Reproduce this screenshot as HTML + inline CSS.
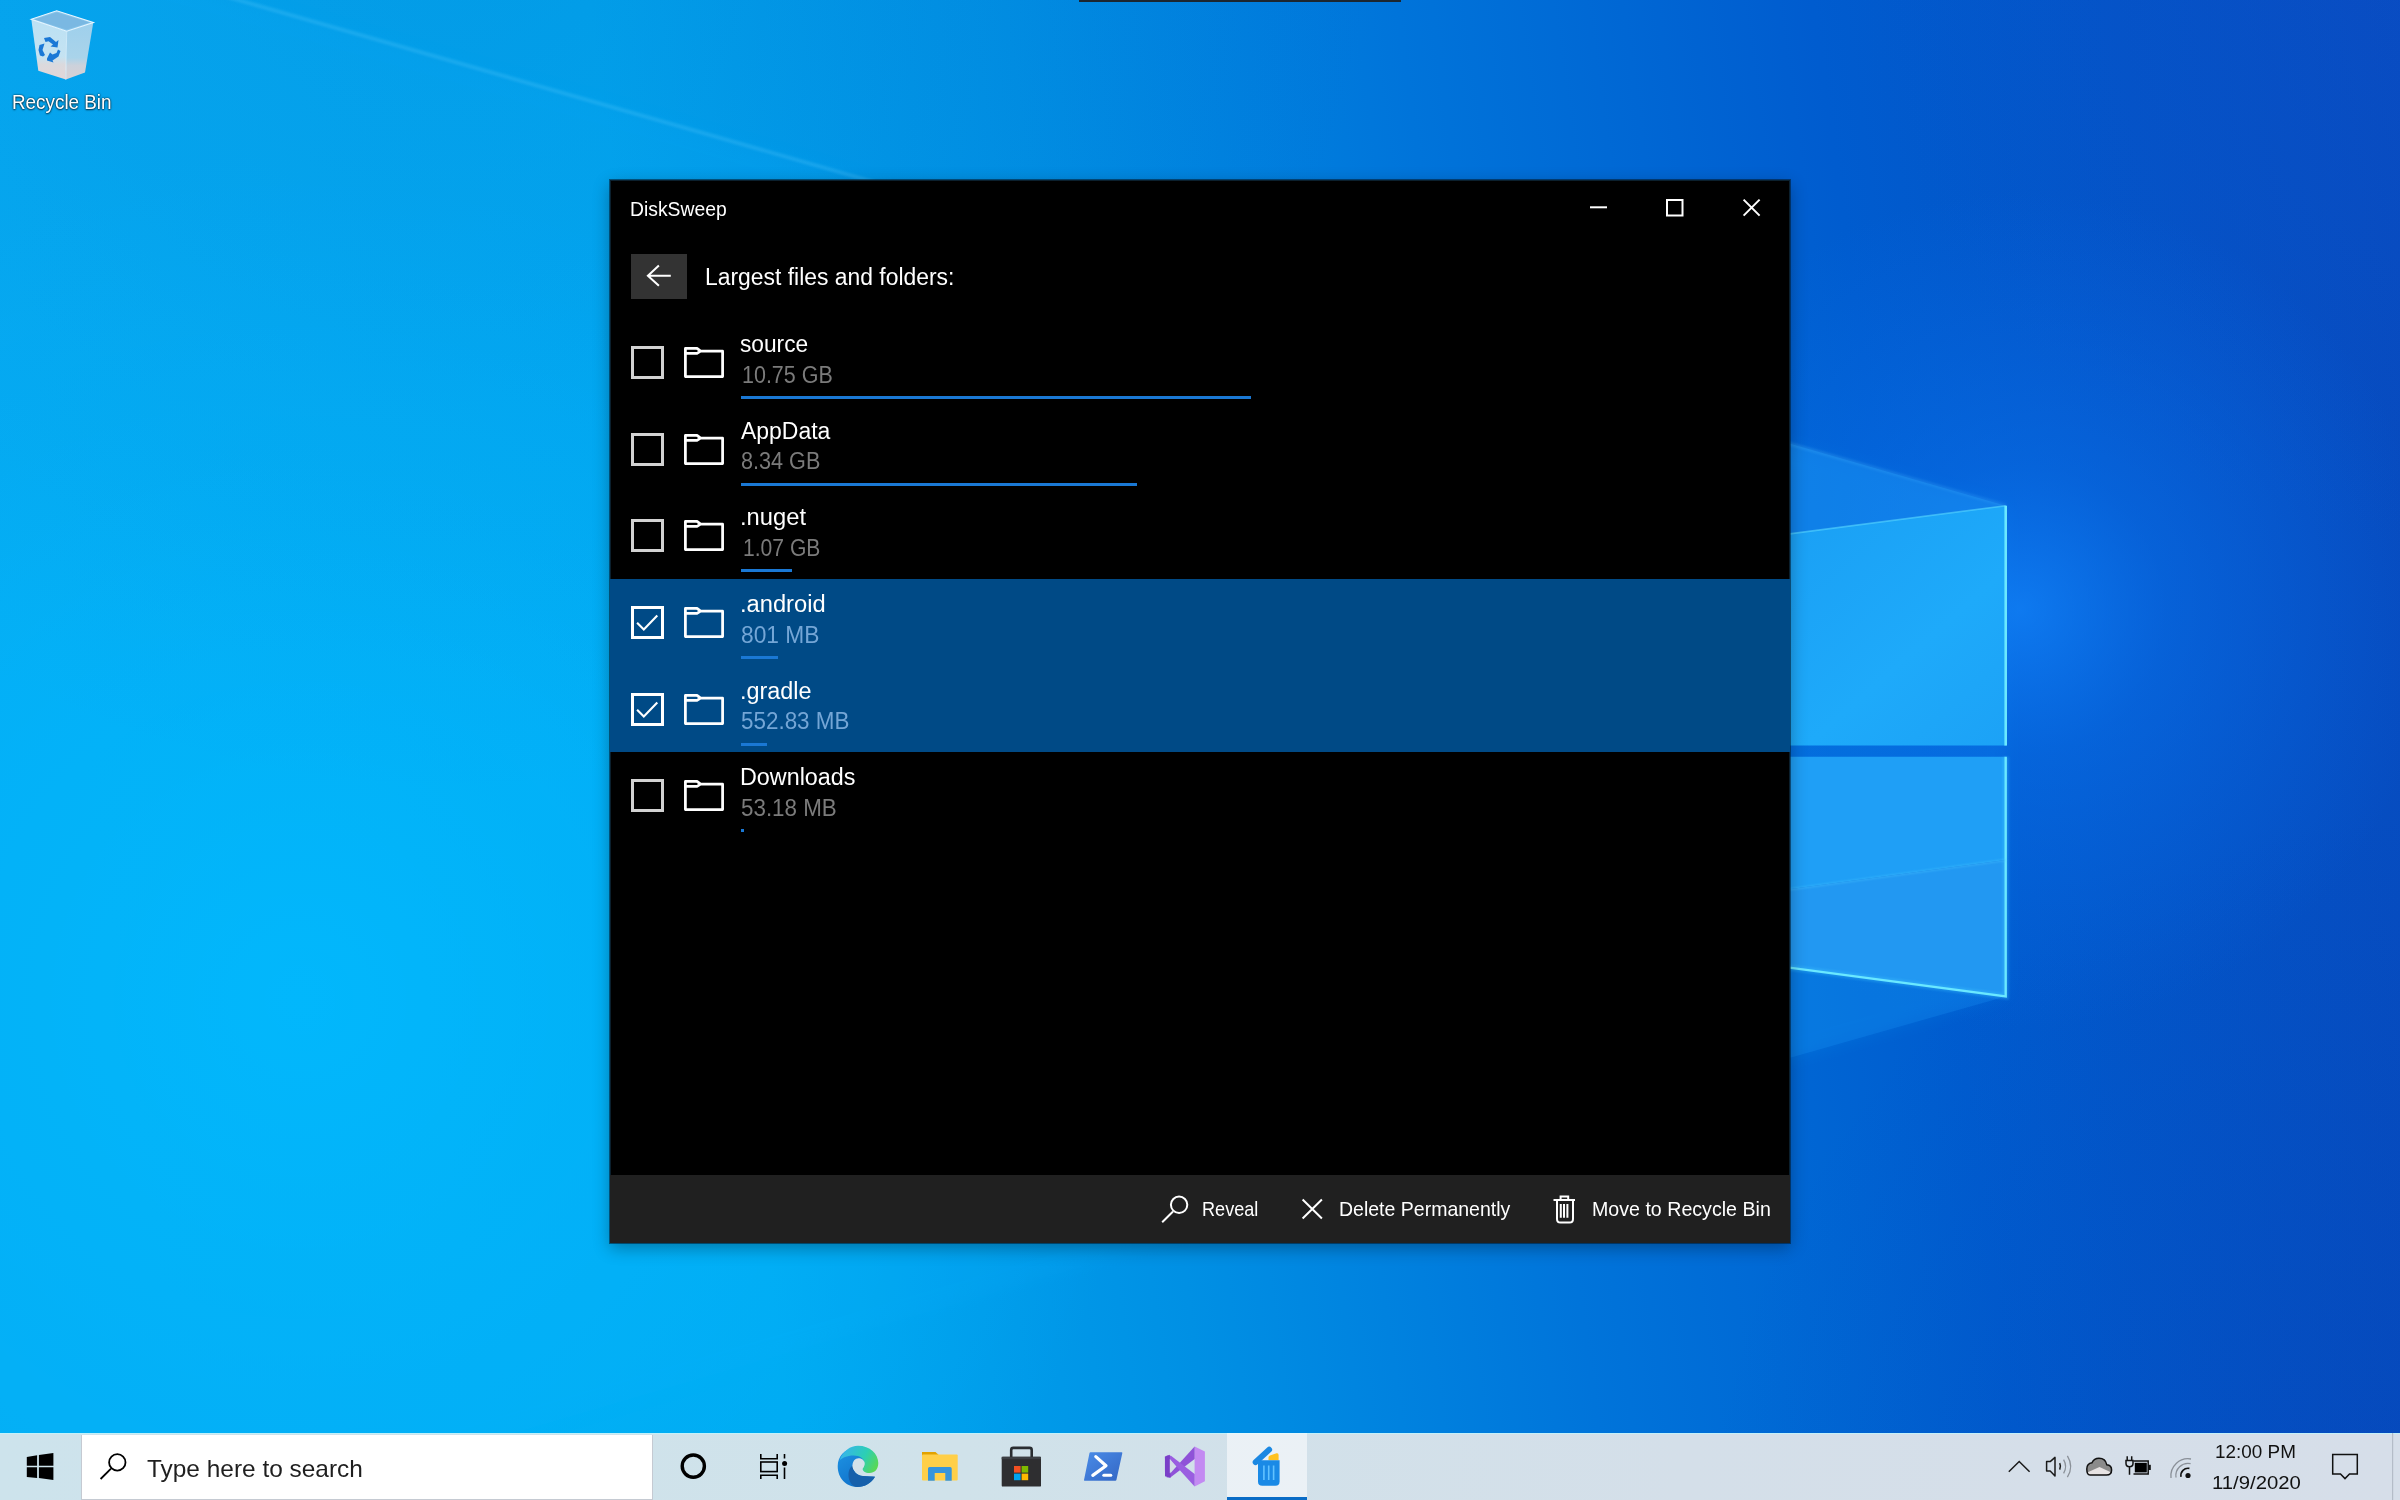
<!DOCTYPE html>
<html><head><meta charset="utf-8">
<style>
*{margin:0;padding:0;box-sizing:border-box}
html,body{width:2400px;height:1500px;overflow:hidden}
body{position:relative;font-family:"Liberation Sans",sans-serif;background:#0a7ee0}
.abs{position:absolute}
svg.abs{overflow:visible}
#wall{position:absolute;left:0;top:0;width:2400px;height:1500px;overflow:hidden;
 background:linear-gradient(90deg,#00b0f4 0%,#00acf2 22%,#0092e6 42%,#0070d8 62%,#0058cc 80%,#0a4ec0 100%)}
.t{position:absolute;white-space:nowrap;line-height:1}
#win{position:absolute;left:610px;top:180px;width:1180px;height:1063px;background:#000;box-shadow:0 0 0 1px rgba(0,25,45,.55),inset 0 0 0 1px rgba(15,45,65,.7),0 5px 16px rgba(0,0,0,.32)}
#sel{position:absolute;left:0;top:399px;width:1180px;height:173px;background:#004a86}
.nm{left:131px;font-size:23px;color:#fff}
.sz{left:131px;font-size:23px;color:rgba(255,255,255,.5)}
.bar{left:131px;height:3px;background:#1a78d4}
#cmd{position:absolute;left:0;top:995px;width:1180px;height:68px;background:#202020}
.ct{font-size:21px;color:#fff}
#taskbar{position:absolute;left:0;top:1433px;width:2400px;height:67px;background:linear-gradient(90deg,#cde3ec 0%,#d0e2ea 40%,#d4dfe9 70%,#d6dee9 100%)}
</style></head>
<body>
<div id="wall"><svg id="wallsvg" width="2400" height="1500" viewBox="0 0 2400 1500" style="position:absolute;left:0;top:0">
<defs>
 <linearGradient id="gb" gradientUnits="userSpaceOnUse" x1="0" y1="170" x2="2400" y2="-170">
  <stop offset="0" stop-color="#04aaf0"/>
  <stop offset="0.25" stop-color="#00a8f0"/>
  <stop offset="0.42" stop-color="#0090e4"/>
  <stop offset="0.58" stop-color="#0074da"/>
  <stop offset="0.75" stop-color="#005ccf"/>
  <stop offset="1" stop-color="#0848bc"/>
 </linearGradient>
 <radialGradient id="glow" gradientUnits="userSpaceOnUse" cx="2020" cy="610" r="420">
  <stop offset="0" stop-color="#1488ff" stop-opacity="0.7"/>
  <stop offset="0.35" stop-color="#0c78f4" stop-opacity="0.38"/>
  <stop offset="1" stop-color="#0a70f0" stop-opacity="0"/>
 </radialGradient>
 <radialGradient id="cyan" gradientUnits="userSpaceOnUse" cx="300" cy="1000" r="850">
  <stop offset="0" stop-color="#00bcff" stop-opacity="0.8"/>
  <stop offset="1" stop-color="#00bcff" stop-opacity="0"/>
 </radialGradient>
 <linearGradient id="pane1" gradientUnits="userSpaceOnUse" x1="1790" y1="500" x2="2005" y2="745">
  <stop offset="0" stop-color="#1a9ff4"/>
  <stop offset="0.6" stop-color="#1eaafa"/>
  <stop offset="1" stop-color="#1ca2f6"/>
 </linearGradient>

 <radialGradient id="tl" gradientUnits="userSpaceOnUse" cx="450" cy="-150" r="950">
  <stop offset="0" stop-color="#1050b0" stop-opacity="0.16"/>
  <stop offset="1" stop-color="#1050b0" stop-opacity="0"/>
 </radialGradient>
 <radialGradient id="br" gradientUnits="userSpaceOnUse" cx="2450" cy="1550" r="750">
  <stop offset="0" stop-color="#0830a0" stop-opacity="0.22"/>
  <stop offset="1" stop-color="#0830a0" stop-opacity="0"/>
 </radialGradient>
 <radialGradient id="tr" gradientUnits="userSpaceOnUse" cx="2450" cy="-50" r="600">
  <stop offset="0" stop-color="#1060e0" stop-opacity="0.18"/>
  <stop offset="1" stop-color="#1060e0" stop-opacity="0"/>
 </radialGradient>
 <filter id="b8" x="-20%" y="-20%" width="140%" height="140%"><feGaussianBlur stdDeviation="8"/></filter>
 <filter id="b2"><feGaussianBlur stdDeviation="1.2"/></filter>
</defs>
<rect width="2400" height="1500" fill="url(#gb)"/>
<rect width="2400" height="1500" fill="url(#cyan)"/>
<rect width="2400" height="1500" fill="url(#tl)"/>
<rect width="2400" height="1500" fill="url(#br)"/>
<rect width="2400" height="1500" fill="url(#tr)"/>
<!-- beam fan (lighter) -->
<polygon points="2005.7,505.7 250,3.6 -400,-180 -400,1700 2005.7,996.4" fill="#10b0ff" opacity="0.12" filter="url(#b8)"/>
<!-- streak line -->
<line x1="2005.7" y1="505.7" x2="-10" y2="-71" stroke="#66d0ff" stroke-width="4" opacity="0.22" filter="url(#b2)"/>
<rect width="2400" height="1500" fill="url(#glow)"/>
<!-- logo upper beam wedge -->
<polygon points="2005.7,505.7 1600,389 1600,558.5" fill="#28a8ff" opacity="0.32"/>
<!-- lower beam wedge -->
<polygon points="2005.7,996.4 1600,942.4 1600,1112" fill="#20a0ff" opacity="0.22"/>
<!-- upper pane -->
<polygon points="1600,558.5 2005.7,505.7 2005.7,745.6 1600,745.6" fill="url(#pane1)"/>
<!-- lower pane -->
<polygon points="1600,756.8 2005.7,756.8 2005.7,860 1600,915" fill="#1f9ff6"/>
<polygon points="1600,915 2005.7,860 2005.7,996.4 1600,942.4" fill="#2298f2"/>
<!-- edges -->
<path d="M1600 558.5 L2005.7 505.7" fill="none" stroke="#5ad8ff" stroke-width="1.6" opacity="0.6"/><path d="M2005.7 505.7 V745.6" fill="none" stroke="#40c8ff" stroke-width="6" opacity="0.35" filter="url(#b2)"/><path d="M2005.7 505.7 V745.6" fill="none" stroke="#6ae8ff" stroke-width="2.6"/>
<path d="M2005.7 756.8 V996.4 L1600 942.4" fill="none" stroke="#40c8ff" stroke-width="6" opacity="0.3" filter="url(#b2)"/><path d="M2005.7 756.8 V996.4 L1600 942.4" fill="none" stroke="#6ae8ff" stroke-width="2.4"/>
<line x1="1600" y1="915" x2="2005.7" y2="860" stroke="#48c8ff" stroke-width="2" opacity="0.45" filter="url(#b2)"/>
</svg>
</div>

<!-- desktop icon -->
<svg class="abs" style="left:0;top:0" width="130" height="90" viewBox="0 0 130 90">
 <defs>
  <linearGradient id="rbl" x1="0" y1="0" x2="0" y2="1"><stop offset="0" stop-color="#c4e4f4"/><stop offset="0.62" stop-color="#cfe6f2"/><stop offset="0.75" stop-color="#e6dcdc"/><stop offset="1" stop-color="#efd9d6"/></linearGradient>
  <linearGradient id="rbr" x1="0" y1="0" x2="0" y2="1"><stop offset="0" stop-color="#a6d2ec"/><stop offset="0.62" stop-color="#b2d6ea"/><stop offset="0.75" stop-color="#d6d4da"/><stop offset="1" stop-color="#e4d2d2"/></linearGradient>
 </defs>
 <polygon points="31.3,19.2 66.7,31.2 65.8,79.6 38.3,70.8" fill="url(#rbl)" opacity="0.95"/>
 <polygon points="66.7,31.2 93.3,22.5 85,72.5 65.8,79.6" fill="url(#rbr)" opacity="0.95"/>
 <polygon points="31.3,19.2 56.7,10.8 93.3,22.5 66.7,31.2" fill="#86c4ea"/>
 <polygon points="34.5,19.6 56.7,12.6 89.5,22.6 66.7,29.6" fill="#7ab8e2"/>
 <path d="M31.3 19.2 L56.7 10.8 L93.3 22.5 L66.7 31.2 Z" fill="none" stroke="#e8f6ff" stroke-width="1.2"/>
 <path d="M66.7 31.2 L65.8 79.6" stroke="#e0f0fa" stroke-width="0.8"/>
 <g fill="#1a78d6">
  <path d="M44 38 L50 37 L56 42 L58.5 40 L57.5 47.5 L50.5 46.5 L53 44.5 L48.5 41.2 L45.5 42 Z"/>
  <path d="M39.5 45 L44.5 43.5 L42.5 50 L45 55 L43 56.6 L40 55.6 L38.5 50 Z"/>
  <path d="M47 58.5 L50 52.5 L52.5 54.5 L56.5 53 L58 49.5 L60.5 51 L58.5 56.5 L52.5 60.5 L53.5 62.5 L47 60.5 Z"/>
 </g>
</svg>
<div class="t" style="left:12.27px;top:93.24px;font-size:19.80px;color:#fff;transform:scaleX(0.9530);transform-origin:0 0;text-shadow:0 0 2px rgba(0,0,0,.9),0 1px 2px rgba(0,0,0,.6)">Recycle Bin</div>

<div class="abs" style="left:1079px;top:0;width:322px;height:2px;background:#1c2630"></div>
<div id="win">
  <!-- caption buttons -->
  <svg class="abs" style="left:978px;top:17px" width="26" height="26" viewBox="0 0 26 26"><path d="M2 10.3 H19" stroke="#fff" stroke-width="2"/></svg>
  <svg class="abs" style="left:1056px;top:19px" width="18" height="18" viewBox="0 0 18 18"><rect x="1" y="1" width="15.5" height="15.5" fill="none" stroke="#fff" stroke-width="2"/></svg>
  <svg class="abs" style="left:1133px;top:19px" width="18" height="18" viewBox="0 0 18 18"><path d="M0.6 0.6 L16.6 16.6 M16.6 0.6 L0.6 16.6" stroke="#fff" stroke-width="2"/></svg>
  <div class="abs" style="left:21px;top:74px;width:56px;height:45px;background:#333"></div>
  <svg class="abs" style="left:21px;top:74px" width="56" height="45" viewBox="0 0 56 45"><path d="M27.9 11.6 L16.9 21.7 L27.9 31.8 M16.9 21.7 H39.8" fill="none" stroke="#fff" stroke-width="2"/></svg>
  <div id="sel"></div>
  <div id="cmd">
    <svg class="abs" style="left:550px;top:19px" width="32" height="32" viewBox="0 0 32 32"><circle cx="19.1" cy="10.8" r="8.2" fill="none" stroke="#fff" stroke-width="2"/><path d="M13 17.5 L2.2 28.2" stroke="#fff" stroke-width="2"/></svg>
    <svg class="abs" style="left:690px;top:24px" width="24" height="24" viewBox="0 0 24 24"><path d="M2.6 0.5 L21.9 19.5 M21.9 0.5 L2.6 19.5" stroke="#fff" stroke-width="2"/></svg>
    <svg class="abs" style="left:941.6px;top:19.9px" width="24" height="30" viewBox="0 0 24 30"><path d="M1.5 5.1 H23 M5 5.1 V24 Q5 27.6 8.5 27.6 H17.5 Q21 27.6 21 24 V5.1 M8.6 5.1 V1.6 H16.2 V5.1 M8.8 9 V22.7 M12 9 V22.7 M15.4 9 V22.7" fill="none" stroke="#fff" stroke-width="2"/></svg>
  </div>
</div>
<div class="t" style="left:630.11px;top:199.72px;font-size:19.70px;color:#fff;transform:scaleX(0.9815);transform-origin:0 0">DiskSweep</div>
<div class="t" style="left:705.32px;top:266.48px;font-size:23.30px;color:#fff;transform:scaleX(0.9825);transform-origin:0 0">Largest files and folders:</div>
<svg class="abs" style="left:631px;top:345.90px" width="33" height="33" viewBox="0 0 33 33"><rect x="1.5" y="1.5" width="30" height="30" fill="none" stroke="#d2d2d2" stroke-width="3"/></svg>
<svg class="abs" style="left:684px;top:347.10px" width="40" height="31" viewBox="0 0 40 31"><path d="M1.4 29.6 V1.4 H13 L16.6 4.2 H38.6 V29.6 Z M1.4 6.4 H13 L16.6 4.2" fill="none" stroke="#fff" stroke-width="2.75" stroke-linejoin="round"/></svg>
<div class="t" style="left:739.76px;top:332.83px;font-size:23.00px;color:#fff;transform:scaleX(0.9869);transform-origin:0 0">source</div>
<div class="t" style="left:741.68px;top:363.63px;font-size:23.00px;color:#7b7b7b;transform:scaleX(0.9338);transform-origin:0 0">10.75 GB</div>
<div class="abs" style="left:741px;top:396.00px;width:510px;height:3px;background:#1a78d4"></div>
<svg class="abs" style="left:631px;top:432.57px" width="33" height="33" viewBox="0 0 33 33"><rect x="1.5" y="1.5" width="30" height="30" fill="none" stroke="#d2d2d2" stroke-width="3"/></svg>
<svg class="abs" style="left:684px;top:433.77px" width="40" height="31" viewBox="0 0 40 31"><path d="M1.4 29.6 V1.4 H13 L16.6 4.2 H38.6 V29.6 Z M1.4 6.4 H13 L16.6 4.2" fill="none" stroke="#fff" stroke-width="2.75" stroke-linejoin="round"/></svg>
<div class="t" style="left:740.58px;top:419.50px;font-size:23.00px;color:#fff;transform:scaleX(0.9981);transform-origin:0 0">AppData</div>
<div class="t" style="left:740.82px;top:450.30px;font-size:23.00px;color:#7b7b7b;transform:scaleX(0.9401);transform-origin:0 0">8.34 GB</div>
<div class="abs" style="left:741px;top:482.67px;width:396px;height:3px;background:#1a78d4"></div>
<svg class="abs" style="left:631px;top:519.24px" width="33" height="33" viewBox="0 0 33 33"><rect x="1.5" y="1.5" width="30" height="30" fill="none" stroke="#d2d2d2" stroke-width="3"/></svg>
<svg class="abs" style="left:684px;top:520.44px" width="40" height="31" viewBox="0 0 40 31"><path d="M1.4 29.6 V1.4 H13 L16.6 4.2 H38.6 V29.6 Z M1.4 6.4 H13 L16.6 4.2" fill="none" stroke="#fff" stroke-width="2.75" stroke-linejoin="round"/></svg>
<div class="t" style="left:739.86px;top:506.17px;font-size:23.00px;color:#fff;transform:scaleX(1.0319);transform-origin:0 0">.nuget</div>
<div class="t" style="left:742.55px;top:536.97px;font-size:23.00px;color:#7b7b7b;transform:scaleX(0.9171);transform-origin:0 0">1.07 GB</div>
<div class="abs" style="left:741px;top:569.34px;width:51px;height:3px;background:#1a78d4"></div>
<svg class="abs" style="left:631px;top:605.91px" width="33" height="33" viewBox="0 0 33 33"><rect x="1.5" y="1.5" width="30" height="30" fill="none" stroke="#fff" stroke-width="3"/><path d="M6.1 16.7 L12.8 23.6 L26.3 9.6" fill="none" stroke="#fff" stroke-width="2.1"/></svg>
<svg class="abs" style="left:684px;top:607.11px" width="40" height="31" viewBox="0 0 40 31"><path d="M1.4 29.6 V1.4 H13 L16.6 4.2 H38.6 V29.6 Z M1.4 6.4 H13 L16.6 4.2" fill="none" stroke="#fff" stroke-width="2.75" stroke-linejoin="round"/></svg>
<div class="t" style="left:739.74px;top:592.84px;font-size:23.00px;color:#fff;transform:scaleX(1.0299);transform-origin:0 0">.android</div>
<div class="t" style="left:740.80px;top:623.64px;font-size:23.00px;color:#74a6d6;transform:scaleX(0.9899);transform-origin:0 0">801 MB</div>
<div class="abs" style="left:741px;top:656.01px;width:37px;height:3px;background:#1a78d4"></div>
<svg class="abs" style="left:631px;top:692.58px" width="33" height="33" viewBox="0 0 33 33"><rect x="1.5" y="1.5" width="30" height="30" fill="none" stroke="#fff" stroke-width="3"/><path d="M6.1 16.7 L12.8 23.6 L26.3 9.6" fill="none" stroke="#fff" stroke-width="2.1"/></svg>
<svg class="abs" style="left:684px;top:693.78px" width="40" height="31" viewBox="0 0 40 31"><path d="M1.4 29.6 V1.4 H13 L16.6 4.2 H38.6 V29.6 Z M1.4 6.4 H13 L16.6 4.2" fill="none" stroke="#fff" stroke-width="2.75" stroke-linejoin="round"/></svg>
<div class="t" style="left:739.77px;top:679.51px;font-size:23.00px;color:#fff;transform:scaleX(1.0177);transform-origin:0 0">.gradle</div>
<div class="t" style="left:741.11px;top:710.31px;font-size:23.00px;color:#74a6d6;transform:scaleX(0.9747);transform-origin:0 0">552.83 MB</div>
<div class="abs" style="left:741px;top:742.68px;width:26px;height:3px;background:#1a78d4"></div>
<svg class="abs" style="left:631px;top:779.25px" width="33" height="33" viewBox="0 0 33 33"><rect x="1.5" y="1.5" width="30" height="30" fill="none" stroke="#d2d2d2" stroke-width="3"/></svg>
<svg class="abs" style="left:684px;top:780.45px" width="40" height="31" viewBox="0 0 40 31"><path d="M1.4 29.6 V1.4 H13 L16.6 4.2 H38.6 V29.6 Z M1.4 6.4 H13 L16.6 4.2" fill="none" stroke="#fff" stroke-width="2.75" stroke-linejoin="round"/></svg>
<div class="t" style="left:740.07px;top:766.18px;font-size:23.00px;color:#fff;transform:scaleX(1.0144);transform-origin:0 0">Downloads</div>
<div class="t" style="left:741.03px;top:796.98px;font-size:23.00px;color:#7b7b7b;transform:scaleX(0.9729);transform-origin:0 0">53.18 MB</div>
<div class="abs" style="left:741px;top:829.35px;width:3px;height:3px;background:#1a78d4"></div>
<div class="t" style="left:1201.73px;top:1198.82px;font-size:20.30px;color:#fff;transform:scaleX(0.8920);transform-origin:0 0">Reveal</div>
<div class="t" style="left:1339.04px;top:1198.82px;font-size:20.30px;color:#fff;transform:scaleX(0.9616);transform-origin:0 0">Delete Permanently</div>
<div class="t" style="left:1591.70px;top:1198.82px;font-size:20.30px;color:#fff;transform:scaleX(0.9672);transform-origin:0 0">Move to Recycle Bin</div>

<div id="taskbar">
 <div class="abs" style="left:0;top:0;width:2400px;height:1px;background:rgba(190,245,255,.75)"></div>
 <!-- start -->
 <svg class="abs" style="left:0;top:0" width="80" height="67" viewBox="0 1433 80 67">
  <polygon points="26.8,1457.1 37.1,1455.3 37.1,1465.8 26.8,1465.8" fill="#000"/>
  <polygon points="38.9,1454.9 53.4,1453.1 53.4,1465.8 38.9,1465.8" fill="#000"/>
  <polygon points="26.8,1467.2 37.1,1467.2 37.1,1477.9 26.8,1477" fill="#000"/>
  <polygon points="38.9,1467.2 53.4,1467.2 53.4,1479.9 38.9,1478.1" fill="#000"/>
 </svg>
 <!-- search box -->
 <div class="abs" style="left:80.5px;top:1.5px;width:572px;height:65.5px;background:#fff;border:1px solid #c5cad2;border-top:none"></div>
 <svg class="abs" style="left:0;top:0" width="660" height="67" viewBox="0 1433 660 67">
  <circle cx="117.3" cy="1462.4" r="8.2" fill="none" stroke="#000" stroke-width="1.8"/>
  <path d="M111 1468.6 L100.6 1479" stroke="#000" stroke-width="1.8"/>
 </svg>
 <div class="t" style="left:146.80px;top:24.15px;font-size:23.80px;color:#1f1f1f;transform:scaleX(1.0263);transform-origin:0 0">Type here to search</div>
 <!-- cortana + taskview -->
 <svg class="abs" style="left:0;top:0" width="1320" height="67" viewBox="0 1433 1320 67">
  <circle cx="693.3" cy="1466.1" r="11.1" fill="none" stroke="#000" stroke-width="3.4"/>
  <path d="M760.8 1454 V1458.8 H777.2 V1454 M760.8 1479 V1475.2 H777.2 V1479" fill="none" stroke="#000" stroke-width="1.6"/>
  <rect x="760.8" y="1462" width="16.4" height="9.6" fill="none" stroke="#000" stroke-width="1.6"/>
  <path d="M784.5 1454 V1458.6 M784.5 1467.4 V1479" stroke="#000" stroke-width="1.6"/>
  <circle cx="784.6" cy="1463.4" r="2.5" fill="#000"/>
 </svg>
 <!-- edge -->
 <svg class="abs" style="left:836px;top:11px" width="44" height="46" viewBox="836 1444 44 46">
  <defs>
   <linearGradient id="eg1" gradientUnits="userSpaceOnUse" x1="842" y1="1450" x2="878" y2="1470"><stop offset="0" stop-color="#37b4ec"/><stop offset="0.55" stop-color="#2ccfb4"/><stop offset="1" stop-color="#62d944"/></linearGradient>
   <linearGradient id="eg2" gradientUnits="userSpaceOnUse" x1="840" y1="1455" x2="862" y2="1487"><stop offset="0" stop-color="#1c8fe0"/><stop offset="1" stop-color="#0f6fc8"/></linearGradient>
  </defs>
  <path d="M837.7 1466.3 C837.7 1456 845 1449 853 1449 C861 1449 866 1455 865 1461 L852.5 1465.5 C852.5 1471 857 1475.5 863 1476 C867 1476.5 872 1476.5 875 1476.7 C871.5 1483 864.5 1487 857.3 1487 C846 1487 837.7 1478 837.7 1466.3 Z" fill="url(#eg2)"/>
  <path d="M852.5 1465.5 C852.5 1471 857 1475.5 863 1476 L875 1476.7 C871.5 1483 864.5 1487 857.3 1487 C852 1487 848.5 1481 848.5 1475 C848.5 1470 850.5 1467 852.5 1465.5 Z" fill="#1660ab"/>
  <path d="M839.5 1460.5 C843 1450.5 850.5 1445.7 858 1445.7 C870 1445.7 878.3 1454 878.3 1463 C878.3 1469.5 874.5 1473 869.5 1473 C865 1473 862.5 1471 862.5 1468.5 C863.8 1467.3 864.5 1465.5 864.5 1463.5 C864.5 1459 860 1455.5 853.5 1455.5 C847 1455.5 842 1458 839.5 1460.5 Z" fill="url(#eg1)"/>
  <path d="M864.5 1463.5 C864.5 1460 861.5 1458.3 858.5 1458.3 C855 1458.3 852.5 1461.5 852.5 1465.5 C852.5 1469.5 855.5 1472 859 1472.6 C861 1472.8 862.5 1470 862.5 1468.5 C863.8 1467.3 864.5 1465.5 864.5 1463.5 Z" fill="#d3e1ea"/>
 </svg>
 <!-- explorer -->
 <svg class="abs" style="left:920px;top:17px" width="40" height="34" viewBox="920 1450 40 34">
  <path d="M922 1452 H935.5 L938.5 1454.8 L935.5 1457.5 H922 Z" fill="#e2a200"/>
  <rect x="922" y="1454.6" width="35.7" height="26" rx="1" fill="#ffcf48"/>
  <path d="M928 1480.7 V1468.5 Q928 1466.9 929.6 1466.9 H950.1 Q951.7 1466.9 951.7 1468.5 V1480.7 H945.3 V1473 H934.7 V1480.7 Z" fill="#3795dc"/>
 </svg>
 <!-- store -->
 <svg class="abs" style="left:1000px;top:12px" width="44" height="44" viewBox="1000 1445 44 44">
  <path d="M1011.2 1457.5 V1450 Q1011.2 1447.9 1013.3 1447.9 H1029.6 Q1031.7 1447.9 1031.7 1450 V1457.5" fill="none" stroke="#2a2d31" stroke-width="2.6"/>
  <rect x="1001.7" y="1456.8" width="39.3" height="29.8" rx="1.2" fill="#2e2e30"/>
  <rect x="1001.7" y="1456.8" width="39.3" height="2.4" fill="#3c3f44"/>
  <rect x="1014" y="1466" width="6.6" height="6.6" fill="#f25022"/>
  <rect x="1021.6" y="1466" width="6.6" height="6.6" fill="#7fba00"/>
  <rect x="1014" y="1473.6" width="6.6" height="6.6" fill="#00a4ef"/>
  <rect x="1021.6" y="1473.6" width="6.6" height="6.6" fill="#ffb900"/>
 </svg>
 <!-- powershell -->
 <svg class="abs" style="left:1082px;top:17px" width="44" height="34" viewBox="1082 1450 44 34">
  <defs><linearGradient id="psg" x1="0" y1="0" x2="1" y2="1"><stop offset="0" stop-color="#4a8ce8"/><stop offset="1" stop-color="#3366c4"/></linearGradient></defs>
  <path d="M1090.5 1452.2 H1121.6 Q1122.6 1452.2 1122.3 1453.2 L1116.4 1480 Q1116.2 1480.7 1115.4 1480.7 H1084.6 Q1083.8 1480.7 1084 1479.9 L1089.5 1453 Q1089.7 1452.2 1090.5 1452.2 Z" fill="url(#psg)"/>
  <path d="M1095.8 1456.6 L1106 1465.8 L1092.8 1475.4" fill="none" stroke="#fff" stroke-width="3.2" stroke-linecap="round" stroke-linejoin="round"/>
  <path d="M1103.8 1475.3 H1110.8" stroke="#fff" stroke-width="3" stroke-linecap="round"/>
 </svg>
 <!-- visual studio -->
 <svg class="abs" style="left:1162px;top:12px" width="46" height="44" viewBox="1162 1445 46 44">
  <polygon points="1194.6,1446.5 1204.9,1451.4 1204.9,1481.2 1194.6,1486.5" fill="#c38af2"/>
  <polygon points="1194.6,1446.5 1194.6,1459 1171,1477 1166.5,1477.6" fill="#8f52d8"/>
  <polygon points="1166.5,1455.5 1171,1455.8 1194.6,1474 1194.6,1486.5" fill="#9a5ee0"/>
  <polygon points="1164.9,1456.5 1169.8,1454.8 1170.6,1478 1165,1476.2" fill="#7a3fc8"/>
  <polygon points="1169.8,1459 1175.3,1466.3 1169.8,1473.3" fill="#d4dde6"/>
 </svg>
 <!-- active disksweep -->
 <div class="abs" style="left:1226.5px;top:0;width:80.4px;height:67px;background:rgba(255,255,255,.55)"></div>
 <div class="abs" style="left:1226.5px;top:63.7px;width:80.4px;height:3.3px;background:#0a6cc6"></div>
 <svg class="abs" style="left:1248px;top:12px" width="36" height="44" viewBox="1248 1445 36 44">
  <path d="M1255.6 1462.2 L1269.2 1449.6" stroke="#1b88e2" stroke-width="5.8" stroke-linecap="round"/>
  <path d="M1268.5 1460.3 V1457.6 Q1268.5 1456 1270 1455.4 L1276.5 1453.3 Q1278.6 1452.8 1278.6 1455 V1460.3 Z" fill="#ffc220"/>
  <path d="M1258 1460.3 H1279.6 V1481.5 Q1279.6 1485.8 1275.3 1485.8 H1262.3 Q1258 1485.8 1258 1481.5 Z" fill="#1a8ae6"/>
  <path d="M1263.9 1465.5 V1480 M1268.7 1465.5 V1480 M1273.6 1465.5 V1480" stroke="#62c2ff" stroke-width="1.6"/>
 </svg>
 <!-- tray -->
 <svg class="abs" style="left:2000px;top:0" width="400" height="67" viewBox="2000 1433 400 67">
  <path d="M2008.8 1471.7 L2019.2 1461.5 L2029.6 1471.7" fill="none" stroke="#1a1a1a" stroke-width="1.5"/>
  <path d="M2046.6 1461.6 H2050.2 L2055 1457.4 V1476 L2050.2 1471 H2046.6 Z" fill="none" stroke="#1a1a1a" stroke-width="1.5" stroke-linejoin="round"/>
  <path d="M2059.7 1463.2 Q2061.3 1466.4 2059.7 1469.6" fill="none" stroke="#1a1a1a" stroke-width="1.5"/>
  <path d="M2063.6 1459.6 Q2067.6 1466.4 2063.6 1473.4" fill="none" stroke="#8a9098" stroke-width="1.3"/>
  <path d="M2067.4 1455.8 Q2074 1466.4 2067.4 1477.2" fill="none" stroke="#8a9098" stroke-width="1.3"/>
  <path d="M2090 1475 H2106.5 Q2111.6 1475 2111.6 1470 Q2111.6 1465.2 2106.8 1464.8 Q2105.5 1458.3 2099 1458.3 Q2094 1458.3 2092 1462.7 Q2086.8 1463.4 2086.8 1469 Q2086.8 1475 2090 1475 Z" fill="#8b8b8b"/>
  <path d="M2087.2 1472.5 L2099.5 1467 L2111.4 1472.5 Q2110.5 1475 2106.5 1475 H2090 Q2088 1475 2087.2 1472.5 Z" fill="#e7e3e3"/>
  <path d="M2090 1475 H2106.5 Q2111.6 1475 2111.6 1470 Q2111.6 1465.2 2106.8 1464.8 Q2105.5 1458.3 2099 1458.3 Q2094 1458.3 2092 1462.7 Q2086.8 1463.4 2086.8 1469 Q2086.8 1475 2090 1475 Z" fill="none" stroke="#111" stroke-width="1.5"/>
  <path d="M2127.2 1456.3 V1460.5 M2131.7 1456.3 V1460.5 M2126 1460.5 H2133 V1463.5 Q2133 1466.7 2129.5 1466.7 Q2126 1466.7 2126 1463.5 Z M2129.5 1466.7 V1474.8" fill="none" stroke="#111" stroke-width="1.5"/>
  <path d="M2133.5 1461.1 H2148.2 V1473.9 H2133.5" fill="none" stroke="#111" stroke-width="1.5"/>
  <rect x="2134.8" y="1462.8" width="12" height="9.6" fill="#000"/>
  <rect x="2148.2" y="1464.8" width="2.6" height="5.2" fill="#111"/>
  <circle cx="2188" cy="1475.5" r="2.6" fill="#111"/>
  <path d="M2181 1476.8 A7.2 7.2 0 0 1 2189.4 1468.4" fill="none" stroke="#111" stroke-width="1.6"/>
  <path d="M2176 1477.5 A12.2 12.2 0 0 1 2190.6 1463.6" fill="none" stroke="#8a9098" stroke-width="1.3"/>
  <path d="M2171 1478 A17.2 17.2 0 0 1 2191 1459" fill="none" stroke="#8a9098" stroke-width="1.3"/>
  <path d="M2332.7 1454.4 H2357.3 V1474 H2349.5 L2345 1478.6 L2340.5 1474 H2332.7 Z" fill="none" stroke="#111" stroke-width="1.5"/>
  <rect x="2392" y="1433" width="1.2" height="67" fill="#b4bcc8"/>
 </svg>
 <div class="t" style="left:2214.99px;top:10.01px;font-size:18.60px;color:#111;transform:scaleX(1.0161);transform-origin:0 0">12:00 PM</div><div class="t" style="left:2211.94px;top:40.86px;font-size:18.60px;color:#111;transform:scaleX(1.0928);transform-origin:0 0">11/9/2020</div>
</div>

</body></html>
